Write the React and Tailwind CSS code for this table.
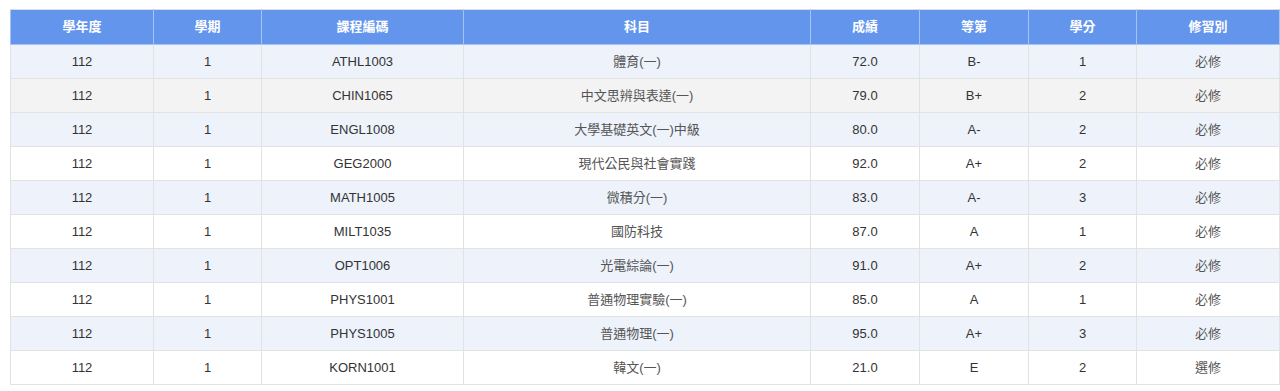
const headers = ["學年度", "學期", "課程編碼", "科目", "成績", "等第", "學分", "修習別"];

const widths = ["w-[143px]", "w-[108px]", "w-[202px]", "w-[347px]", "w-[109px]", "w-[109px]", "w-[108px]", "w-[143px]"];

const rows = [
  ["112", "1", "ATHL1003", "體育(一)", "72.0", "B-", "1", "必修"],
  ["112", "1", "CHIN1065", "中文思辨與表達(一)", "79.0", "B+", "2", "必修"],
  ["112", "1", "ENGL1008", "大學基礎英文(一)中級", "80.0", "A-", "2", "必修"],
  ["112", "1", "GEG2000", "現代公民與社會實踐", "92.0", "A+", "2", "必修"],
  ["112", "1", "MATH1005", "微積分(一)", "83.0", "A-", "3", "必修"],
  ["112", "1", "MILT1035", "國防科技", "87.0", "A", "1", "必修"],
  ["112", "1", "OPT1006", "光電綜論(一)", "91.0", "A+", "2", "必修"],
  ["112", "1", "PHYS1001", "普通物理實驗(一)", "85.0", "A", "1", "必修"],
  ["112", "1", "PHYS1005", "普通物理(一)", "95.0", "A+", "3", "必修"],
  ["112", "1", "KORN1001", "韓文(一)", "21.0", "E", "2", "選修"],
];

function rowBg(i) {
  if (i === 1) return "bg-[#f3f3f3]";
  return i % 2 === 0 ? "bg-[#edf2fb]" : "bg-white";
}

// CJK cells render lighter in the original
const cjkCols = [3, 7];

export default function App() {
  return (
    <div className="min-h-[391px] bg-white pl-[10px] pt-[9px] font-['Liberation_Sans','Noto_Sans_CJK_TC',sans-serif] text-[13px] text-[#333]">
      <table className="w-[1269px] table-fixed border-collapse">
        <colgroup>
          {widths.map((w, i) => (
            <col key={i} className={w} />
          ))}
        </colgroup>
        <thead>
          <tr className="h-[35px] bg-[#6495ed]">
            {headers.map((h) => (
              <th
                key={h}
                className="border border-[#a7c3f3] border-t-[#dcdcdc] text-center align-middle font-bold text-white"
              >
                {h}
              </th>
            ))}
          </tr>
        </thead>
        <tbody>
          {rows.map((row, i) => (
            <tr key={row[2]} className={`h-[34px] ${rowBg(i)}`}>
              {row.map((cell, j) => (
                <td
                  key={j}
                  className={`border border-[#e2e2e2] text-center align-middle ${cjkCols.includes(j) ? "text-[#555]" : ""}`}
                >
                  {cell}
                </td>
              ))}
            </tr>
          ))}
        </tbody>
      </table>
    </div>
  );
}
